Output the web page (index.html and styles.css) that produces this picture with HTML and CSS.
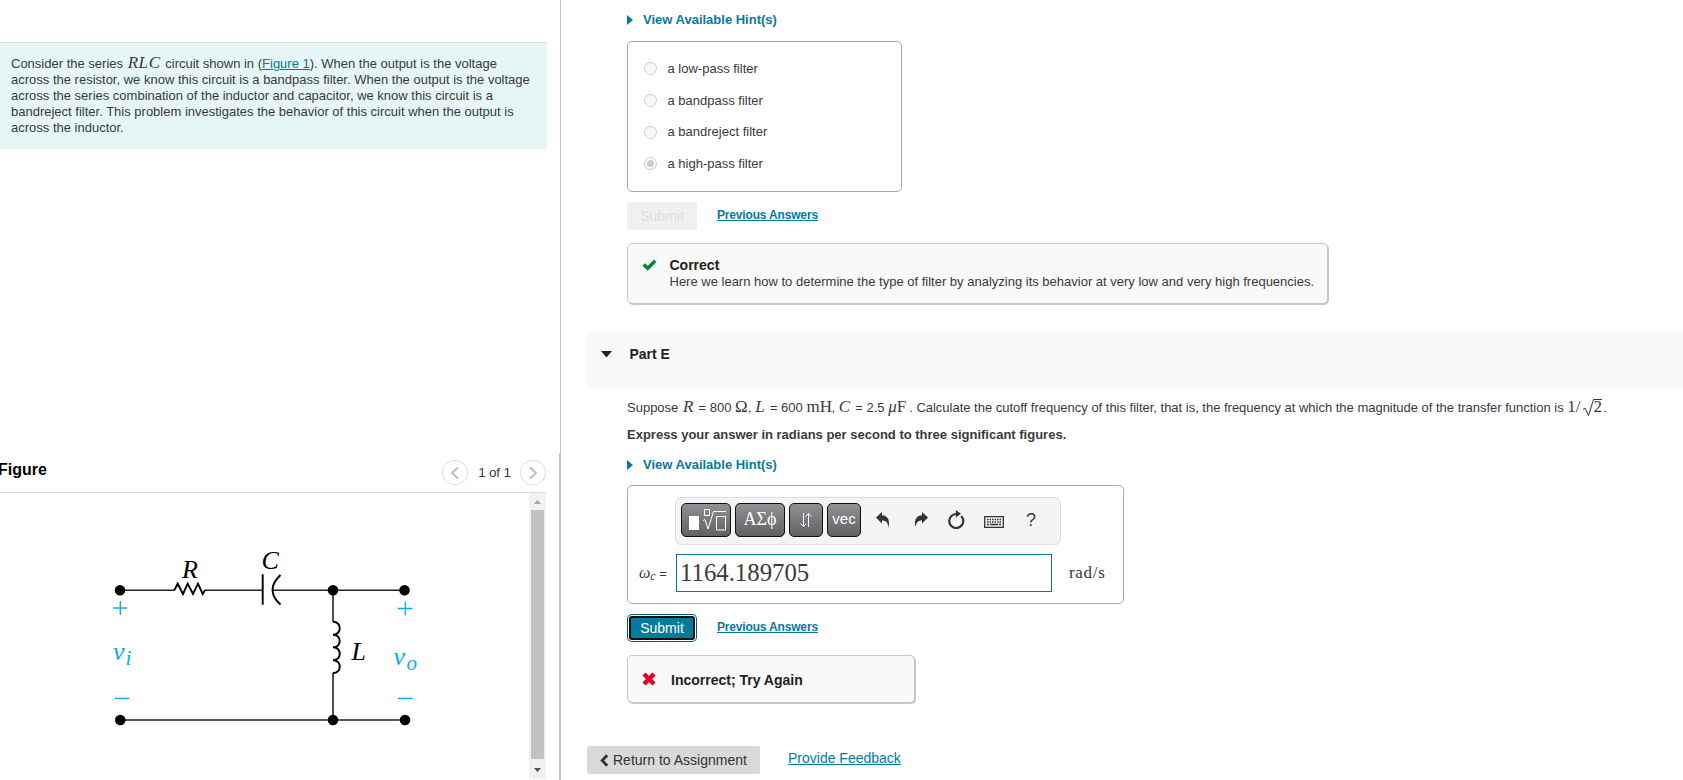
FILE: index.html
```html
<!DOCTYPE html>
<html lang="en">
<head>
  <meta charset="UTF-8" />
  <meta name="viewport" content="width=device-width, initial-scale=1.0" />
  <title>Part E</title>
  <link rel="stylesheet" href="styles.css">
</head>
<body>
  <div class="page">
    <aside class="left">
      <div class="intro">
        <span class="line">Consider the series <i class="math rlc">RLC</i> circuit shown in (<a href="#figure">Figure 1</a>). When the output is the voltage</span>
        <span class="line">across the resistor, we know this circuit is a bandpass filter. When the output is the voltage</span>
        <span class="line">across the series combination of the inductor and capacitor, we know this circuit is a</span>
        <span class="line">bandreject filter. This problem investigates the behavior of this circuit when the output is</span>
        <span class="line">across the inductor.</span>
      </div>

      <div class="figure" id="figure">
        <div class="figure-header">
          <h2>Figure</h2>
          <div class="pager">
            <button class="nav"><svg width="10" height="14" viewBox="0 0 10 14"><path d="M8 1.5L2 7l6 5.5" /></svg></button>
            <span>1 of 1</span>
            <button class="nav"><svg width="10" height="14" viewBox="0 0 10 14"><path d="M2 1.5L8 7l-6 5.5" /></svg></button>
          </div>
        </div>
        <div class="figure-body">
          <svg class="circuit" width="529" height="287" viewBox="0 493 529 287">
            <g class="wire">
              <path d="M120 590.3H174.3M205 590.3H262.7M272.5 590.3H405M120 720H405M333 590V621.8M333 673V720" />
            </g>
            <g class="part">
              <path d="M174.3 590.3L177.7 583.7L183 594L187.7 583.7L193 594L198 583.7L202.7 594L205 590.3" />
              <path d="M262.7 574.3V604.7M280.5 575Q264.5 590 280.5 604.5" />
              <path d="M333 621.8C342 621.5 342 635 333 634.7C342 634.5 342 647.5 333 647.3C342 647 342 660.5 333 660.2C342 660 342 673.3 333 673" />
            </g>
            <circle cx="120" cy="590.3" r="5.3" />
            <circle cx="333" cy="590.3" r="5.3" />
            <circle cx="404.5" cy="590.3" r="5.3" />
            <circle cx="120.3" cy="720" r="5.3" />
            <circle cx="333" cy="720" r="5.3" />
            <circle cx="405" cy="720" r="5.3" />
            <path class="sign" d="M113 608h14M120.300 601v14M398 608.500h14.500M405.300 601.500v14M115 698.300h14.500M398 698.300h14.500" />
            <text x="182" y="578">R</text>
            <text x="261.5" y="569">C</text>
            <text x="351.5" y="660">L</text>
            <g class="volt">
              <text x="113" y="660">v</text>
              <text class="sub" x="125.5" y="664.5">i</text>
              <text x="393.5" y="664.5">v</text>
              <text class="sub" x="406.5" y="669.5">o</text>
            </g>
          </svg>
          <div class="scrollbar">
            <svg width="7" height="4" viewBox="0 0 7 4"><path fill="#a3a3a3" d="M0 4L3.500 0L7 4z" /></svg>
            <div class="thumb"></div>
            <svg width="7" height="4" viewBox="0 0 7 4"><path fill="#505050" d="M0 0h7L3.500 4z" /></svg>
          </div>
        </div>
      </div>
    </aside>

    <main class="right">
      <div class="content">
        <div class="hints first">View Available Hint(s)</div>
        <div class="choices">
          <label><span class="radio"></span>a low-pass filter</label>
          <label><span class="radio"></span>a bandpass filter</label>
          <label><span class="radio"></span>a bandreject filter</label>
          <label><span class="radio checked"></span>a high-pass filter</label>
        </div>
        <div class="actions">
          <button class="btn-submit disabled">Submit</button>
          <a href="#">Previous Answers</a>
        </div>
        <div class="feedback correct">
          <svg width="15" height="12" viewBox="0 0 15 12"><path d="M1.700 5.500L5.700 9.300L13.300 1.800" fill="none" stroke="#008638" stroke-width="3.400" /></svg>
          <div>
            <h3>Correct</h3>
            <p>Here we learn how to determine the type of filter by analyzing its behavior at very low and very high frequencies.</p>
          </div>
        </div>
      </div>

      <div class="part-header">
        <svg width="11" height="7" viewBox="0 0 11 7"><path d="M0 0h11L5.500 6.500z" fill="#222" /></svg>
        <h3>Part E</h3>
      </div>

      <div class="content">
        <div class="question">Suppose <i class="math v-r">R</i> = 800 <span class="math v-ohm">Ω</span>, <i class="math v-l">L</i> = 600 <span class="math v-mh">mH</span>, <i class="math v-c">C</i> = 2.5 <span class="math v-uf"><i>μ</i>F</span>. <span class="calc">Calculate the cutoff frequency of this filter, that is, the frequency at which the magnitude of the transfer function is</span> <span class="math v-one">1/</span><svg class="root" width="22" height="19" viewBox="0 0 22 19"><path d="M2 11.500l2-1.500L7.500 17.500L12.500 1.500H21" fill="none" stroke="#333" /><text x="12.500" y="14">2</text></svg>.</div>
        <div class="express">Express your answer in radians per second to three significant figures.</div>
        <div class="hints">View Available Hint(s)</div>

        <div class="answer">
          <div class="toolbar">
            <button class="tool wide">
              <svg width="40" height="24" viewBox="0 0 40 24">
                <path d="M3 8h10v14H3z" fill="#fff" />
                <path d="M18.500 1.500h5v6h-5zM17 12.500l2-1L22 21L27.500 3.500H40M30.500 8.500h9v13.500h-9z" fill="none" stroke="#fff" />
              </svg>
            </button>
            <button class="tool wide greek">ΑΣϕ</button>
            <button class="tool">
              <svg width="14" height="16" viewBox="0 0 14 16"><path d="M4.500 1v13.500M1.500 11.500L4.500 14.500l3-3M9.500 15V1.500M6.500 4.500L9.500 1.500l3 3" fill="none" stroke="#fff" /></svg>
            </button>
            <button class="tool vec">vec</button>
            <svg class="undo" width="14" height="16" viewBox="0 0 14 16"><path d="M0 5.500L6 0v3.200C11.500 3.400 14.500 8 12.300 15.500C12 11 10.500 8.500 6 8.500V11.500z" /></svg>
            <svg class="redo" width="14" height="16" viewBox="0 0 14 16"><path d="M14 5.500L8 0v3.200C2.500 3.400-.500 8 1.700 15.500C2 11 3.500 8.500 8 8.500V11.500z" /></svg>
            <svg class="reset" width="17" height="19" viewBox="0 0 17 19"><path d="M13.200 6A7 7 0 1 1 8.500 4" fill="none" stroke="#333" stroke-width="2.200" /><path d="M7.800 0L13 3.700L7.800 7.500z" /></svg>
            <svg class="keyboard" width="20" height="12" viewBox="0 0 20 12"><path d="M.7.7h18.600v10.600H.7z" fill="none" stroke="#333" stroke-width="1.300" /><path d="M3 3.500h14M3 6h14" fill="none" stroke="#333" stroke-width="1.500" stroke-dasharray="1.500 1" /><path d="M3 8.500h2M6 8.500h8M15 8.500h2" fill="none" stroke="#333" stroke-width="1.500" /></svg>
            <span class="help">?</span>
          </div>
          <div class="entry">
            <label><i>ω<sub>c</sub></i> =</label>
            <div class="field">1164.189705</div>
            <span class="unit">rad/s</span>
          </div>
        </div>

        <div class="actions">
          <button class="btn-submit focused">Submit</button>
          <a href="#">Previous Answers</a>
        </div>
        <div class="feedback incorrect">
          <svg width="14" height="14" viewBox="0 0 14 14"><path d="M2 2l10 10M12 2L2 12" fill="none" stroke="#e00025" stroke-width="4.500" /></svg>
          <h3>Incorrect; Try Again</h3>
        </div>
      </div>

      <div class="footer">
        <button class="btn-return"><svg width="9" height="13" viewBox="0 0 9 13"><path d="M7.200 1.200L2.200 6.500l5 5.300" fill="none" stroke="#333" stroke-width="2.800" /></svg>Return to Assignment</button>
        <a href="#">Provide Feedback</a>
      </div>
    </main>
  </div>
</body>
</html>
```

FILE: styles.css
```css
* {
  box-sizing: border-box;
}
body {
  margin: 0;
  background: #fff;
  color: #3a3a3a;
  font: 13px/16px "Liberation Sans", Arial, sans-serif;
}
h2, h3, p {
  margin: 0;
}
h3 {
  font-size: 14px;
  line-height: 16px;
  color: #222;
}
a {
  color: #047a9c;
}
svg {
  display: block;
  flex: none;
}
button {
  font-family: inherit;
  border: none;
  padding: 0;
}
.page {
  display: flex;
  height: 780px;
  overflow: hidden;
}

/* left column */
.left {
  width: 561px;
  flex: none;
  display: flex;
  flex-direction: column;
  justify-content: space-between;
  padding-top: 42px;
  border-right: 1px solid #b9cbdf;
}
.intro {
  width: 547px;
  height: 107px;
  padding: 13px 0 0 11px;
  border-top: 1px solid #d5dcdc;
  background: #e6f6f7;
}
.line {
  display: block;
  height: 16px;
  white-space: nowrap;
}
.math {
  display: inline-block;
  font-family: "Liberation Serif", "Times New Roman", serif;
  font-size: 17px;
  line-height: 0;
  white-space: nowrap;
}
.rlc {
  width: 34px;
  margin-left: 1px;
  letter-spacing: 0.6px;
}
.figure {
  height: 327px;
  border-right: 1px solid #b9cbdf;
}
.figure-header {
  display: flex;
  justify-content: space-between;
  width: 546px;
  height: 40px;
  padding-top: 7px;
  border-bottom: 1px solid #dcdcdc;
}
.figure-header h2 {
  margin: 1px 0 0 -2px;
  font-size: 16px;
  line-height: 18px;
  color: #000;
}
.pager {
  display: flex;
}
.pager span {
  width: 52px;
  padding: 5px 0 0 1px;
  text-align: center;
  font-size: 13.5px;
  letter-spacing: -0.2px;
}
.nav {
  display: flex;
  align-items: center;
  justify-content: center;
  width: 26px;
  height: 25px;
  border: 1px solid #ddd;
  border-radius: 50%;
  background: #fff;
}
.nav path {
  fill: none;
  stroke: #bbb;
  stroke-width: 1.8;
}
.figure-body {
  display: flex;
}
.wire path {
  fill: none;
  stroke: #222;
  stroke-width: 1.6;
}
.part path {
  fill: none;
  stroke: #000;
  stroke-width: 1.9;
}
.circuit text {
  font: italic 26px "Liberation Serif", "Times New Roman", serif;
}
.sign {
  stroke: #00aeef;
  stroke-width: 1.3;
}
.circuit .volt text {
  fill: #00aeef;
}
.circuit .volt .sub {
  font-size: 21px;
}
.scrollbar {
  display: flex;
  flex-direction: column;
  align-items: center;
  justify-content: space-between;
  width: 17px;
  height: 286px;
  padding: 7px 0;
  background: #f1f1f1;
}
.thumb {
  width: 13px;
  height: 249px;
  margin-bottom: 3px;
  background: #c1c1c1;
}

/* right column */
.right {
  flex: 1;
  padding-left: 26px;
}
.content {
  padding-left: 40px;
}
.hints {
  display: flex;
  align-items: center;
  height: 16px;
  margin: 14px 0 12px;
  color: #047a9c;
  font-weight: bold;
}
.hints::before {
  content: "";
  margin-right: 10px;
  border: solid transparent;
  border-width: 5.5px 0 5.5px 6px;
  border-left-color: #047a9c;
}
.hints.first {
  margin: 0 0 13px;
  padding-top: 12px;
  height: 28px;
}
.choices {
  width: 275px;
  height: 151px;
  padding: 11px 16px;
  border: 1px solid #aaa;
  border-radius: 5px;
}
.choices label {
  display: flex;
  align-items: center;
  height: 31.7px;
}
.radio {
  display: flex;
  align-items: center;
  justify-content: center;
  width: 13px;
  height: 13px;
  margin-right: 10.5px;
  border: 1px solid #ccc;
  border-radius: 50%;
  background: #f8f8f8;
}
.radio.checked::after {
  content: "";
  width: 7px;
  height: 7px;
  border-radius: 50%;
  background: #ccc;
}
.actions {
  display: flex;
  margin: 10px 0 13px;
}
.actions a {
  margin: 6px 0 0 20px;
  font-size: 12px;
  line-height: 15px;
  font-weight: bold;
  letter-spacing: -0.17px;
}
.btn-submit {
  width: 70px;
  height: 28px;
  font-size: 14px;
  border-radius: 2px;
}
.disabled {
  background: #f0f0f0;
  color: #ddd;
}
.focused {
  color: #fff;
  background: #047a9c;
  border: 2px solid #101010;
  border-radius: 3px;
  width: 66px;
  height: 24px;
  margin: 2px;
  box-shadow: 0 0 0 1px #fff, 0 0 0 2px #005a70;
}
.feedback {
  display: flex;
  border: 1px solid #c7c7c7;
  border-radius: 5px;
  background: #f9f9f9;
  box-shadow: 1px 1px 0 #c7c7c7;
}
.correct {
  width: 701px;
  height: 61px;
  padding: 13px 0 0 14px;
}
.correct svg {
  margin: 2px 12.5px 0 0;
}
.correct p {
  margin-top: 1px;
  white-space: nowrap;
}
.incorrect {
  align-items: center;
  width: 288px;
  height: 48px;
  padding-left: 14px;
}
.incorrect svg {
  margin-right: 15px;
}
.incorrect h3 {
  padding-top: 2px;
}
.part-header {
  display: flex;
  height: 57px;
  margin: 27px 0 12px;
  padding: 15px 0 0 14px;
  background: #f9f9f9;
}
.part-header svg {
  margin: 5px 17.5px 0 0;
}
.question {
  height: 16px;
  white-space: nowrap;
}
.v-r {
  width: 12px;
  margin-left: 1px;
}
.v-ohm {
  width: 13px;
}
.v-l {
  width: 11px;
}
.v-mh {
  width: 25px;
}
.v-c {
  width: 13px;
}
.v-uf {
  width: 21px;
}
.v-one {
  width: 14px;
}
.calc {
  letter-spacing: -0.012px;
}
.root {
  display: inline-block;
  vertical-align: -5px;
  margin-top: -5px;
}
.root text {
  font: 17px "Liberation Serif", "Times New Roman", serif;
  fill: #333;
}
.express {
  margin-top: 11px;
  font-weight: bold;
}
.answer {
  width: 497px;
  height: 119px;
  padding: 11px 0 0 11px;
  border: 1px solid #aaa;
  border-radius: 5px;
}
.toolbar {
  display: flex;
  align-items: center;
  width: 386px;
  height: 48px;
  margin-left: 36px;
  padding: 0 0 2px 5px;
  border: 1px solid #ddd;
  border-radius: 6px;
  background: #f4f4f4;
}
.tool {
  display: flex;
  align-items: center;
  justify-content: center;
  width: 34px;
  height: 34px;
  margin-right: 4px;
  border: 1px solid #111;
  border-radius: 5px;
  background: linear-gradient(#929096, #616161);
  color: #fff;
  font-size: 15px;
}
.tool.wide {
  width: 50px;
}
.tool.vec {
  padding-bottom: 3px;
}
.tool.greek {
  padding-bottom: 1px;
  font: 18px "Liberation Serif", "Times New Roman", serif;
}
.toolbar path:not([fill]) {
  fill: #333;
}
.undo {
  margin-left: 11px;
}
.redo {
  margin-left: 24px;
}
.reset {
  margin: 0 0 2px 20px;
}
.keyboard {
  margin: 4px 0 0 19px;
}
.help {
  margin-left: 22px;
  font-size: 18px;
}
.entry {
  display: flex;
  align-items: center;
  height: 38px;
  margin-top: 9px;
}
.entry label {
  width: 37px;
  white-space: nowrap;
}
.entry i {
  font: italic 16px "Liberation Serif", "Times New Roman", serif;
}
.entry sub {
  font-size: 12px;
  line-height: 0;
  vertical-align: -2px;
}
.field {
  width: 376px;
  height: 38px;
  padding-left: 3px;
  border: 1px solid #047a9c;
  font: 24.8px/36px "Liberation Serif", "Times New Roman", serif;
}
.unit {
  margin-left: 17px;
  font: 17px "Liberation Serif", "Times New Roman", serif;
  letter-spacing: 0.7px;
}
.footer {
  display: flex;
  margin-top: 43px;
  font-size: 14px;
}
.btn-return {
  display: flex;
  align-items: center;
  width: 173px;
  height: 28px;
  padding-left: 13px;
  background: #d9d9d9;
  border-radius: 2px;
  color: #333;
  font-size: 14px;
  white-space: nowrap;
}
.btn-return svg {
  margin-right: 4px;
}
.footer a {
  margin: 4px 0 0 28px;
}
```
